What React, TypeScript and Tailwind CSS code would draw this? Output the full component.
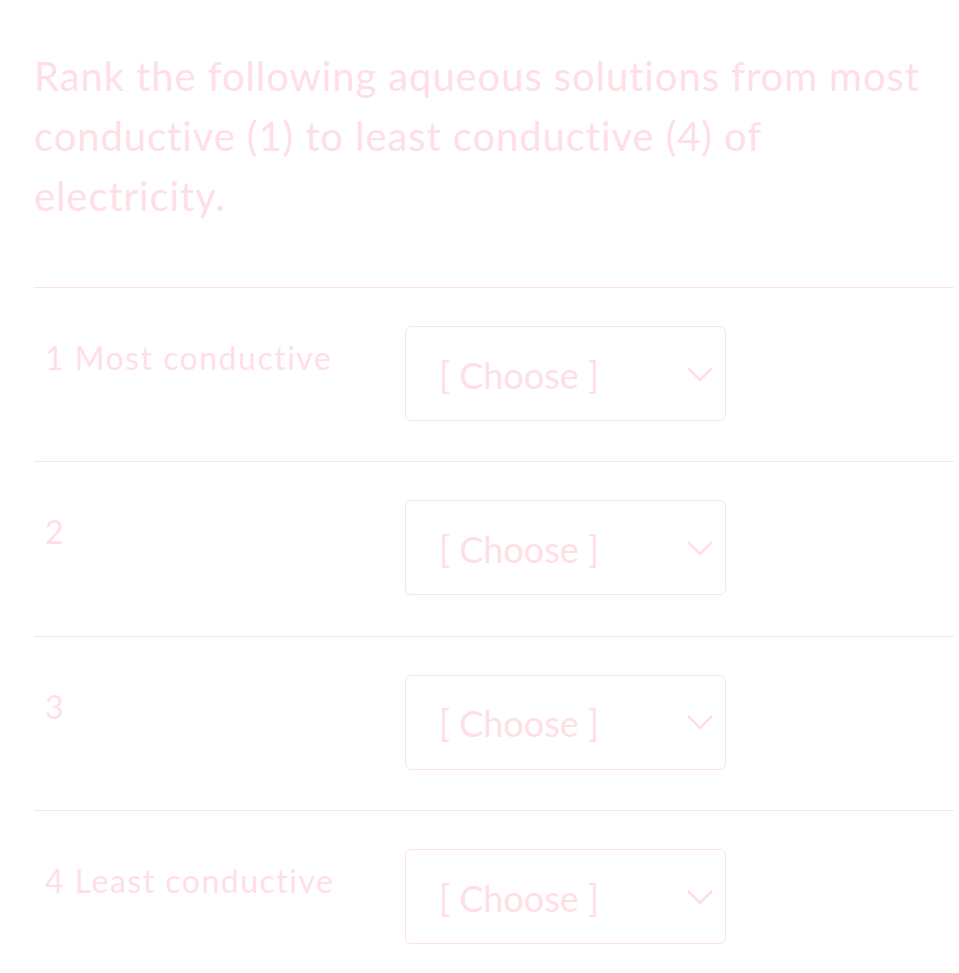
const rows = ["1 Most conductive", "2", "3", "4 Least conductive"];

const Chevron = () => (
  <svg width="28" height="16" viewBox="0 0 28 16" fill="none" className="shrink-0">
    <path d="M2 2 L14 14 L26 2" stroke="#ffdfe6" strokeWidth="2.5" />
  </svg>
);

export default function App() {
  return (
    <div className="min-h-screen bg-white pl-[34px] pr-[5px] pt-[46px] font-['Lato',sans-serif] text-[#ffdfe6]">
      <h1 className="text-[40px] leading-[60px] font-normal tracking-[0.9px] max-w-[900px]">
        Rank the following aqueous solutions from most conductive (1) to least conductive (4) of
        electricity.
      </h1>
      <div className="mt-[61px]">
        {rows.map((label) => (
          <div
            key={label}
            className="flex items-start border-t border-[#fde2ec] h-[174.4px] pt-[38px]"
          >
            <div className="w-[371px] pl-[11px] pt-[12px] text-[32px] leading-[40px] tracking-[1.5px]">
              {label}
            </div>
            <div className="w-[321px] h-[95px] border border-[#fde2ec] rounded-[6px] flex items-center justify-between pl-[33px] pr-[11px]">
              <span className="text-[36px] leading-[44px] pt-[2px]">[ Choose ]</span>
              <Chevron />
            </div>
          </div>
        ))}
      </div>
    </div>
  );
}
